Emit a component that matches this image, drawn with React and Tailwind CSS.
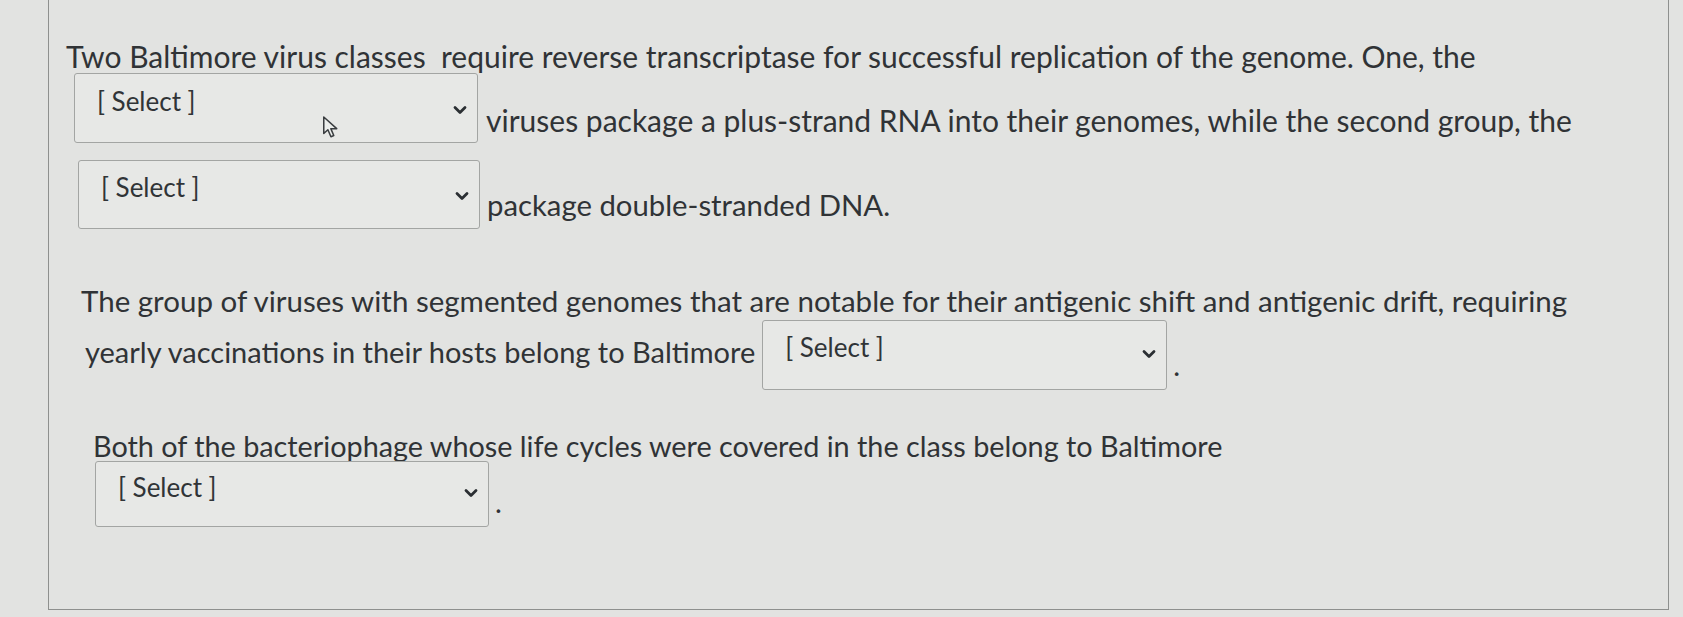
import React from 'react';

function Chevron() {
  return (
    <svg width="14" height="10" viewBox="0 0 14 10" className="shrink-0">
      <path d="M2 2.5 L7 7.5 L12 2.5" fill="none" stroke="#2b2f33" strokeWidth="2.8" strokeLinecap="round" strokeLinejoin="round" />
    </svg>
  );
}

function Select({ className, chevronClass = 'mt-[22px]', textClass = 'pt-[15px]', children }) {
  return (
    <div className={`relative flex shrink-0 justify-between rounded-[3px] border border-[#a3a5a3] bg-[#e7e8e6] pl-[22px] pr-[10px] ${className}`}>
      <span className={`text-[26px] leading-[30px] text-[#303437] ${textClass}`}>[ Select ]</span>
      <div className={chevronClass}>
        <Chevron />
      </div>
      {children}
    </div>
  );
}

export default function App() {
  return (
    <div className="h-[617px] w-[1683px] overflow-hidden bg-[#e2e3e1] font-['Lato','Open_Sans',sans-serif] text-[#303336]">
      <div className="ml-[48px] mr-[14px] h-[610px] border-x border-b border-[#8e908e]">
        <div className="pt-[41px] leading-[30px]">
          <p className="whitespace-nowrap pl-[17px] text-[30px]">Two Baltimore virus classes&nbsp; require reverse transcriptase for successful replication of the genome. One, the</p>

          <div className="mt-[2px] flex items-end pl-[25px]">
            <Select className="h-[70px] w-[404px]" textClass="pt-[12px]" chevronClass="mt-[31px]">
              {/* mouse pointer */}
              <svg width="20" height="24" viewBox="0 0 17 20" className="absolute left-[247px] top-[41px]">
                <path d="M1.5 1.5 L1.5 15.5 L5 12.3 L7.6 18.3 L10 17.2 L7.5 11.4 L12.5 11.4 Z" fill="#eceeec" stroke="#3a3d40" strokeWidth="1.3" strokeLinejoin="round" />
              </svg>
            </Select>
            <span className="mb-[8px] ml-[8px] whitespace-nowrap text-[30px]">viruses package a plus-strand RNA into their genomes, while the second group, the</span>
          </div>

          <div className="mt-[17px] flex items-end pl-[29px]">
            <Select className="h-[69px] w-[402px]" chevronClass="mt-[30px]" textClass="pt-[11px]" />
            <span className="mb-[9px] ml-[7px] whitespace-nowrap text-[29.3px]">package double-stranded DNA.</span>
          </div>

          <p className="mt-[57px] whitespace-nowrap pl-[32px] text-[29.5px]">The group of viruses with segmented genomes that are notable for their antigenic shift and antigenic drift, requiring</p>

          <div className="mt-[4px] flex items-end pl-[36px]">
            <span className="mb-[23px] mr-[7px] whitespace-nowrap text-[29px]">yearly vaccinations in their hosts belong to Baltimore</span>
            <Select className="h-[70px] w-[405px]" textClass="pt-[11px]" chevronClass="mt-[28px]" />
            <span className="mb-[10px] ml-[6px] text-[29px]">.</span>
          </div>

          <p className="mt-[41px] whitespace-nowrap pl-[44px] text-[28.8px]">Both of the bacteriophage whose life cycles were covered in the class belong to Baltimore</p>

          <div className="flex items-end pl-[46px]">
            <Select className="h-[66px] w-[394px]" textClass="pt-[10px]" chevronClass="mt-[26px]" />
            <span className="mb-[10px] ml-[6px] text-[29px]">.</span>
          </div>
        </div>
      </div>
    </div>
  );
}
